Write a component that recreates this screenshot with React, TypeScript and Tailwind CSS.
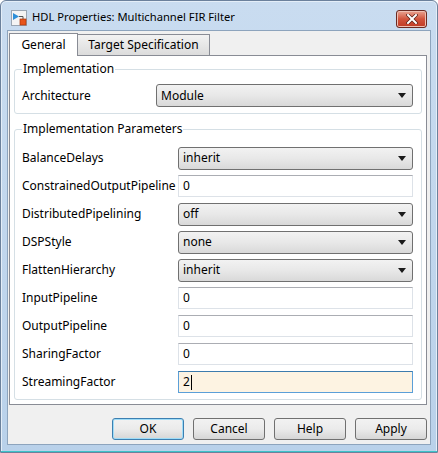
import type { ReactNode } from "react";

const FONT = "font-['Noto_Sans','DejaVu_Sans',sans-serif]";

type Row = { label: string; kind: "select" | "text"; value: string; focused?: boolean };

const PARAMS: Row[] = [
  { label: "BalanceDelays", kind: "select", value: "inherit" },
  { label: "ConstrainedOutputPipeline", kind: "text", value: "0" },
  { label: "DistributedPipelining", kind: "select", value: "off" },
  { label: "DSPStyle", kind: "select", value: "none" },
  { label: "FlattenHierarchy", kind: "select", value: "inherit" },
  { label: "InputPipeline", kind: "text", value: "0" },
  { label: "OutputPipeline", kind: "text", value: "0" },
  { label: "SharingFactor", kind: "text", value: "0" },
  { label: "StreamingFactor", kind: "text", value: "2", focused: true },
];

function Select({ value, className = "" }: { value: string; className?: string }) {
  return (
    <div
      className={`flex h-[23px] items-center justify-between rounded-[3px] border border-[#707070] bg-gradient-to-b from-[#f2f2f2] via-[#e8e8e8] to-[#d9d9d9] pl-[4px] pr-[6px] text-[12px] text-black ${className}`}
    >
      <span>{value}</span>
      <svg width="8" height="5" viewBox="0 0 8 5">
        <path d="M0 0h8L4 5z" fill="#1a1a1a" />
      </svg>
    </div>
  );
}

function TextField({ value, focused }: { value: string; focused?: boolean }) {
  return (
    <div
      className={`flex h-[22px] flex-1 items-center border pl-[4px] text-[12px] text-black ${
        focused
          ? "border-[#5b9fd8] border-t-[#3d7bad] bg-[#fdf3e2]"
          : "border-[#dde2e8] border-t-[#abadb3] bg-white"
      }`}
    >
      <span>{value}</span>
      {focused && <span className="ml-[1px] h-[15px] w-px bg-black" />}
    </div>
  );
}

function Group({ title, children, className = "" }: { title: string; children: ReactNode; className?: string }) {
  return (
    <fieldset className={`rounded-[3px] border border-[#d5dfe5] pl-[7px] pr-[8px] ${className}`}>
      <legend className="px-[1px] text-[12px] leading-[14px] text-black">{title}</legend>
      {children}
    </fieldset>
  );
}

function Button({ label, primary }: { label: string; primary?: boolean }) {
  return (
    <button
      className={`h-[22px] w-[72px] rounded-[3px] border bg-gradient-to-b from-[#f2f2f2] via-[#ebebeb] to-[#d6d6d6] text-[12px] text-black ${
        primary ? "border-[#3c7fb1] shadow-[inset_0_0_0_1px_#9fdcf7]" : "border-[#707070]"
      }`}
    >
      {label}
    </button>
  );
}

export default function App() {
  return (
    <div className={`${FONT} h-[453px] w-[438px] bg-white`}>
      <div className="flex h-full w-full flex-col rounded-t-[6px] border border-[#6b819c] bg-gradient-to-b from-[#c9dcf0] to-[#b9d1ea] shadow-[inset_0_0_0_1px_#e4eef8]">
        {/* title bar */}
        <div className="flex h-[29px] shrink-0 items-center pl-[10px] pr-[10px]">
          <svg width="16" height="16" viewBox="0 0 16 16" className="mt-[4px]">
            <rect x="0.5" y="0.5" width="15" height="15" fill="#f4f4f4" stroke="#9aa6b3" />
            <path d="M2 3l6 3.5L2 10z" fill="#2f8fd8" />
            <path d="M8 6.5h4v4" fill="none" stroke="#555" strokeWidth="1" />
            <rect x="9" y="9" width="6" height="6" fill="#e8551b" stroke="#a8360c" strokeWidth="0.7" />
          </svg>
          <span className="ml-[5px] mt-[4px] text-[11.2px] text-black">HDL Properties: Multichannel FIR Filter</span>
          <div className="ml-auto mt-[7px] flex h-[18px] w-[31px] items-center justify-center rounded-[3px] border border-[#6b2a22] bg-gradient-to-b from-[#e8a493] via-[#d1533c] to-[#c03a24] shadow-[inset_0_0_0_1px_#eebfb2]">
            <svg width="12" height="10" viewBox="0 0 12 10">
              <path d="M2 1l8 8M10 1l-8 8" stroke="#5a1f16" strokeWidth="3.4" strokeLinecap="square" />
              <path d="M2 1l8 8M10 1l-8 8" stroke="#ffffff" strokeWidth="2" strokeLinecap="square" />
            </svg>
          </div>
        </div>

        {/* client area */}
        <div className="mx-[6px] flex flex-1 flex-col border border-[#8da4bd] bg-[#f0f0f0] pl-[1px] pr-[3px]">
          {/* tabs */}
          <div className="mt-[2px] flex h-[22px] items-end text-[12px] text-black">
            <div className="relative z-10 -mb-px flex h-[23px] w-[69px] items-center justify-center border border-b-0 border-[#898c95] bg-white pb-[1px]">
              General
            </div>
            <div className="flex h-[21px] w-[132px] items-center justify-center border border-b-0 border-l-0 border-[#898c95] bg-gradient-to-b from-[#f2f2f2] to-[#dcdcdc]">
              Target Specification
            </div>
          </div>

          {/* tab panel */}
          <div className="flex flex-col border border-[#898c95] bg-white px-[4px] pb-[4px]">
            <Group title="Implementation" className="mt-[6px] pb-[6px]">
              <div className="mt-[8px] flex h-[23px] items-center">
                <span className="w-[134px] text-[12px] text-black">Architecture</span>
                <Select value="Module" className="flex-1" />
              </div>
            </Group>

            <Group title="Implementation Parameters" className="mt-[8px] pb-[6px]">
              <div className="mt-[11px] flex flex-col gap-[6px]">
                {PARAMS.map((p) => (
                  <div key={p.label} className="flex h-[22px] items-center">
                    <span className="w-[156px] shrink-0 whitespace-nowrap text-[12px] text-black">{p.label}</span>
                    {p.kind === "select" ? (
                      <Select value={p.value} className="h-[22px] flex-1" />
                    ) : (
                      <TextField value={p.value} focused={p.focused} />
                    )}
                  </div>
                ))}
              </div>
            </Group>
          </div>

          {/* buttons */}
          <div className="mt-[13px] flex justify-end gap-[9px] pr-[0px]">
            <Button label="OK" primary />
            <Button label="Cancel" />
            <Button label="Help" />
            <Button label="Apply" />
          </div>
        </div>
        <div className="h-[7px] shrink-0 border-b border-[#3cc3c8]" />
      </div>
    </div>
  );
}
